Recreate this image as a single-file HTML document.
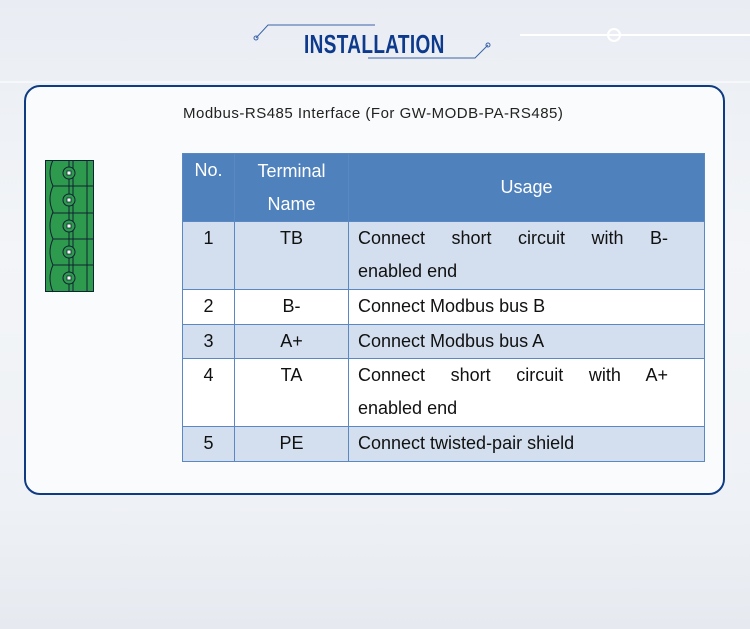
<!DOCTYPE html>
<html><head><style>
*{margin:0;padding:0;box-sizing:border-box}
body{width:750px;height:629px;overflow:hidden;background:linear-gradient(180deg,#e9edf3 0%,#f3f5f8 40%,#eef1f5 80%,#e6eaf0 100%);font-family:"Liberation Sans",sans-serif;position:relative}
.title{position:absolute;left:304px;top:29px;font-size:26px;font-weight:bold;color:#0d3a8c;letter-spacing:0.5px;transform:scaleX(0.73);transform-origin:left}
.card{position:absolute;left:24px;top:85px;width:701px;height:410px;border:2px solid #0f3b82;border-radius:16px;background:#fafbfc}
.sub{position:absolute;left:183px;top:105px;font-size:15px;color:#222;letter-spacing:0.5px}
table{position:absolute;left:182px;top:153px;border-collapse:collapse;font-size:18px;color:#111}
td{border:1px solid #5b87c2;vertical-align:top;line-height:33px;padding:0}
.h td{background:#4f81bd;color:#fff;text-align:center;vertical-align:middle}
.b td{background:#d3dfee}
.w td{background:#fff}
.c{text-align:center}
.u{padding:0 36px 0 9px;text-align:justify;text-align-last:left}
.j{text-align-last:justify}
</style></head><body>
<svg style="position:absolute;left:0;top:0" width="750" height="85">
<polyline points="256,38 268,25 375,25" fill="none" stroke="#3a63a8" stroke-width="1"/>
<circle cx="256" cy="38" r="2" fill="none" stroke="#3a63a8"/>
<polyline points="368,58 475,58 488,45" fill="none" stroke="#3a63a8" stroke-width="1"/>
<circle cx="488" cy="45" r="2" fill="none" stroke="#3a63a8"/>
<line x1="520" y1="35" x2="750" y2="35" stroke="#fff" stroke-width="2"/>
<circle cx="614" cy="35" r="6" fill="none" stroke="#fff" stroke-width="2"/>
<line x1="0" y1="82" x2="750" y2="82" stroke="#fff" stroke-width="1"/>
</svg>
<div class="title">INSTALLATION</div>
<div class="card"></div>
<div class="sub">Modbus-RS485 Interface (For GW-MODB-PA-RS485)</div>
<svg style="position:absolute;left:45px;top:160px" width="50" height="133">
<rect x="0.5" y="0.5" width="48" height="131" fill="#2e9a4e" stroke="#123" stroke-width="1"/>
<line x1="42" y1="0" x2="42" y2="132" stroke="#123"/>
<g stroke="#123" fill="none" stroke-width="1">
<path d="M8 0 Q2 13 8 26 Q2 39 8 52 Q2 66 8 79 Q2 92 8 105 Q2 118 8 132"/>
<line x1="24" y1="0" x2="24" y2="132"/><line x1="28" y1="0" x2="28" y2="132"/>
</g>
<g stroke="#123" fill="#2e9a4e">
<circle cx="24" cy="13" r="6"/><circle cx="24" cy="40" r="6"/><circle cx="24" cy="66" r="6"/><circle cx="24" cy="92" r="6"/><circle cx="24" cy="118" r="6"/>
</g>
<g fill="#fff" stroke="#123" stroke-width="0.8">
<rect x="22" y="11" width="4" height="4"/><rect x="22" y="38" width="4" height="4"/><rect x="22" y="64" width="4" height="4"/><rect x="22" y="90" width="4" height="4"/><rect x="22" y="116" width="4" height="4"/>
</g>
<g stroke="#123"><line x1="8" y1="26" x2="49" y2="26"/><line x1="8" y1="53" x2="49" y2="53"/><line x1="8" y1="79" x2="49" y2="79"/><line x1="8" y1="105" x2="49" y2="105"/></g>
</svg>
<table>
<tr class="h" style="height:68px"><td style="width:52px;vertical-align:top">No.</td><td style="width:114px">Terminal<br>Name</td><td style="width:356px">Usage</td></tr>
<tr class="b" style="height:68px"><td class="c">1</td><td class="c">TB</td><td class="u"><div class="j" style="height:33px">Connect short circuit with B-</div>enabled end</td></tr>
<tr class="w" style="height:35px"><td class="c">2</td><td class="c">B-</td><td class="u">Connect Modbus bus B</td></tr>
<tr class="b" style="height:34px"><td class="c">3</td><td class="c">A+</td><td class="u">Connect Modbus bus A</td></tr>
<tr class="w" style="height:68px"><td class="c">4</td><td class="c">TA</td><td class="u"><div class="j" style="height:33px">Connect short circuit with A+</div>enabled end</td></tr>
<tr class="b" style="height:35px"><td class="c">5</td><td class="c">PE</td><td class="u">Connect twisted-pair shield</td></tr>
</table>
</body></html>
